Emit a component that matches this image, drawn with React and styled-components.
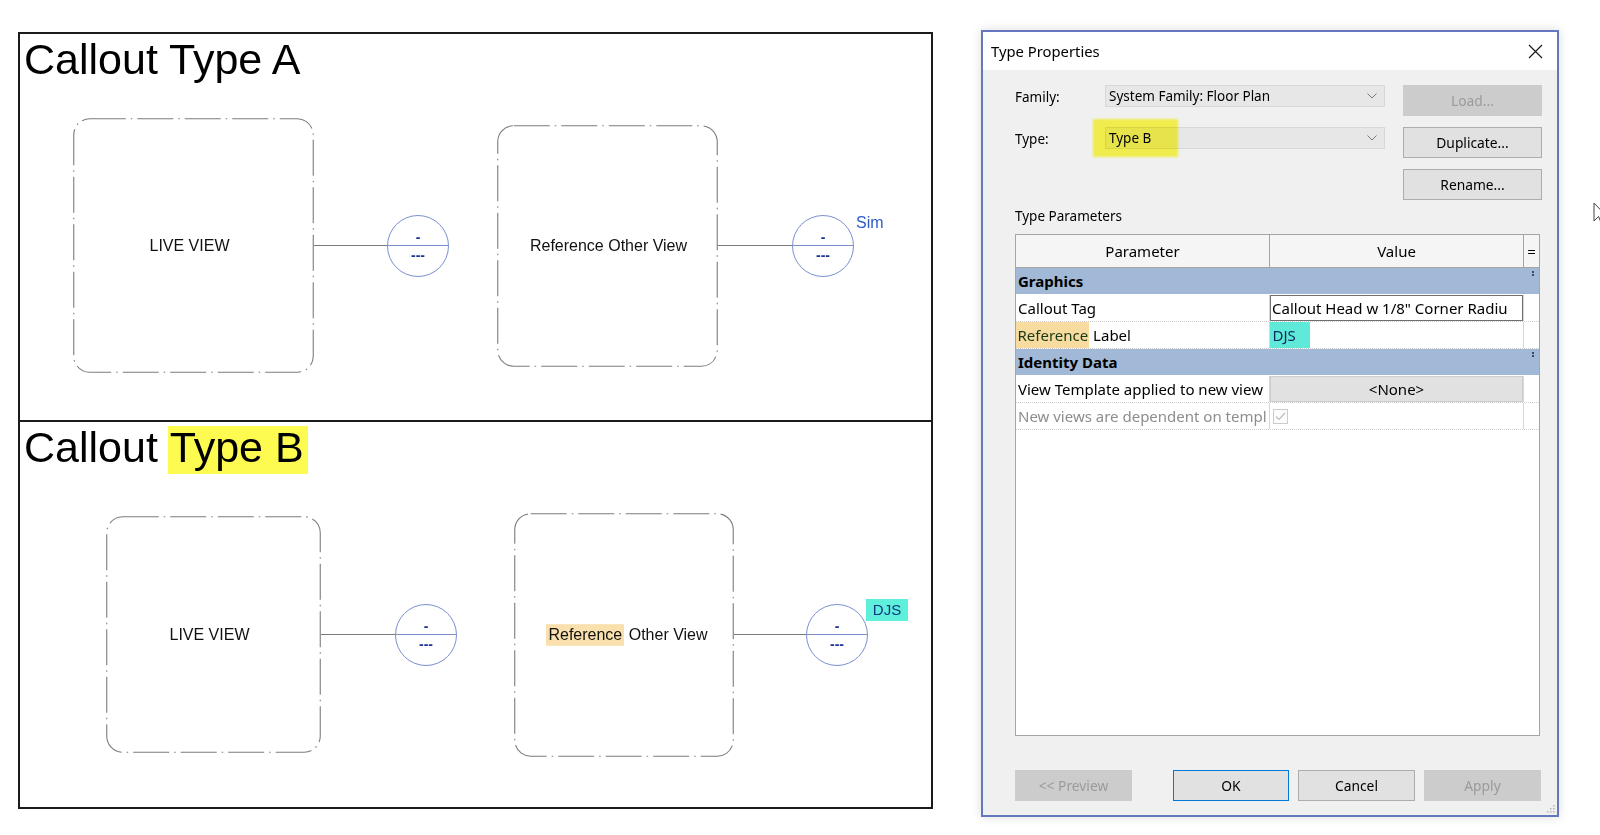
import React from "react";
import styled, { createGlobalStyle } from "styled-components";

const GlobalStyle = createGlobalStyle`
  html, body { margin: 0; padding: 0; background: #fff; }
  body { font-family: "Liberation Sans", Arial, sans-serif; }
  *, *::before, *::after { box-sizing: border-box; }
`;

const Page = styled.div`
  width: 1600px;
  height: 835px;
  overflow: hidden;
  display: flex;
  align-items: flex-start;
  padding: 30px 0 0 18px;
  background: #fff;
`;

/* ---------- drawing sheet ---------- */
const Sheet = styled.div`
  flex: none;
  margin-top: 2px;
  width: 915px;
  height: 777px;
  border: 2px solid #1b1b1b;
  display: flex;
  flex-direction: column;
`;

const Panel = styled.section`
  flex: none;
  height: ${(p) => p.$h}px;
  display: flex;
  flex-direction: column;
`;

const Divider = styled.div`
  flex: none;
  height: 2px;
  background: #1b1b1b;
`;

const SheetTitle = styled.h2`
  flex: none;
  margin: 4px 0 0 4px;
  height: 43px;
  font: 400 43px/1 "Liberation Sans", Arial, sans-serif;
  color: #000;
  white-space: nowrap;
`;

const TitleMark = styled.span`
  display: inline-block;
  background: #fdfb4f;
  padding: 0 4px 5px 2px;
  margin-left: -2px;
`;

const DiagramRow = styled.div`
  flex: none;
  height: ${(p) => p.$h}px;
  display: flex;
  align-items: center;
  padding-left: ${(p) => p.$pad}px;
`;

const ViewBox = styled.div`
  flex: none;
  width: ${(p) => p.$w}px;
  height: ${(p) => p.$h}px;
  margin-left: ${(p) => p.$ml || 0}px;
  display: grid;
  place-items: center;
  & > * { grid-area: 1 / 1; }
`;

const ViewLabel = styled.span`
  font-size: 16px;
  line-height: 20px;
  color: #111;
  white-space: nowrap;
  transform: translateX(${(p) => p.$dx || 0}px) scaleY(1.08);
`;

const LabelTint = styled.span`
  background: #f9e0ac;
  padding: 1px 2px 2px 2px;
  margin-left: -2px;
`;

const Leader = styled.div`
  flex: none;
  width: ${(p) => p.$w}px;
  height: 1px;
  background: #7a7a7a;
`;

const Tag = styled.div`
  flex: none;
  position: relative;
  width: 62px;
  height: 62px;
  border: 1px solid #7a90d0;
  border-radius: 50%;
  background: linear-gradient(#7a90cf, #7a90cf) center / 100% 1px no-repeat;
  display: flex;
  flex-direction: column;
  align-items: center;
  justify-content: center;
  gap: 2px;
`;

const TagText = styled.span`
  font-size: 14px;
  font-weight: 700;
  line-height: 16px;
  color: #1c3394;
`;

const TagNote = styled.span`
  position: absolute;
  white-space: nowrap;
  ${(p) =>
    p.$boxed
      ? `
    left: 59px; top: -6px; width: 42px; height: 22px;
    background: #5ff0dc; color: #0d3580; font-size: 15px;
    display: flex; align-items: center; justify-content: center;
  `
      : `
    left: 63px; top: -2px; font-size: 16px; color: #2c5cc5;
  `}
`;

function ViewFrame({ w, h }) {
  return (
    <svg width={w} height={h} viewBox={`0 0 ${w} ${h}`}>
      <rect
        x="0.75"
        y="0.75"
        width={w - 1.5}
        height={h - 1.5}
        rx="16"
        fill="none"
        stroke="#7c7c7c"
        strokeWidth="1.1"
        strokeDasharray="36 5 1.5 5"
      />
    </svg>
  );
}

function CalloutTag({ note, boxed }) {
  return (
    <Tag>
      <TagText>-</TagText>
      <TagText>---</TagText>
      {note && <TagNote $boxed={boxed}>{note}</TagNote>}
    </Tag>
  );
}

/* ---------- dialog ---------- */
const Dialog = styled.div`
  flex: none;
  position: relative;
  margin-left: 48px;
  width: 578px;
  height: 787px;
  border: 2px solid #6577c0;
  background: #f0f0f0;
  box-shadow: 0 0 10px rgba(0, 0, 0, 0.14);
  display: flex;
  flex-direction: column;
  font-family: "Noto Sans", "Open Sans", sans-serif;
  color: #000;
`;

const TitleBar = styled.div`
  flex: none;
  height: 38px;
  background: #fff;
  display: flex;
  align-items: center;
  justify-content: space-between;
  padding: 0 14px 0 8px;
  font-size: 14.8px;
`;

const DialogBody = styled.div`
  flex: 1;
  display: flex;
  flex-direction: column;
  padding: 15px 15px 14px 32px;
`;

const TopGrid = styled.div`
  display: grid;
  grid-template-columns: 90px 280px 1fr;
  grid-auto-rows: 31px;
  row-gap: 11px;
  align-items: start;
`;

const FieldLabel = styled.label`
  font-size: 13.5px;
  line-height: 22px;
  padding-top: 1px;
`;

const SelectBox = styled.div`
  position: relative;
  height: 22px;
  background: #e7e7e7;
  border: 1px solid #d8d8d8;
  display: flex;
  align-items: center;
  justify-content: space-between;
  padding: 0 7px 0 3px;
  font-size: 13.5px;
`;

const Highlighter = styled.span`
  position: absolute;
  left: -13px;
  top: -9px;
  width: 85px;
  height: 38px;
  background: #fffb52;
  mix-blend-mode: multiply;
  filter: blur(1.2px);
  pointer-events: none;
`;

const DlgButton = styled.button`
  width: ${(p) => p.$w || 139}px;
  height: 31px;
  justify-self: end;
  padding: 0;
  font: 13.8px "Noto Sans", "Open Sans", sans-serif;
  background: ${(p) => (p.disabled ? "#cccccc" : "#e1e1e1")};
  border: 1px solid
    ${(p) => (p.$primary ? "#0078d7" : p.disabled ? "#cccccc" : "#adadad")};
  color: ${(p) => (p.disabled ? "#9b9b9b" : "#000")};
  margin-left: ${(p) => p.$ml || 0}px;
`;

const SectionLabel = styled.div`
  margin-top: 7px;
  height: 18px;
  line-height: 18px;
  font-size: 13.5px;
`;

const ParamTable = styled.div`
  margin-top: 9px;
  width: 525px;
  height: 502px;
  border: 1px solid #a5a5a5;
  background: #fff;
  display: flex;
  flex-direction: column;
  font-size: 15px;
`;

const HeaderRow = styled.div`
  display: grid;
  grid-template-columns: 254px 254px 1fr;
  height: 33px;
  background: #f5f5f5;
  border-bottom: 1px solid #a5a5a5;
`;

const HeaderCell = styled.div`
  display: flex;
  align-items: center;
  justify-content: center;
  border-right: ${(p) => (p.$last ? "none" : "1px solid #a5a5a5")};
`;

const GroupRow = styled.div`
  position: relative;
  height: 27px;
  background: #a1b8d6;
  font-weight: 700;
  display: flex;
  align-items: center;
  padding-left: 2px;
  border-bottom: 1px solid #ffffff;
`;

const GroupMark = styled.span`
  position: absolute;
  right: 5px;
  top: 3px;
  width: 2px;
  height: 2px;
  background: #3a4a66;
  box-shadow: 0 3px 0 #3a4a66;
`;

const DataRow = styled.div`
  display: grid;
  grid-template-columns: 254px 254px 1fr;
  height: 27px;
  border-bottom: 1px dotted #d0d0d0;
`;

const Cell = styled.div`
  display: flex;
  align-items: center;
  padding-left: ${(p) => (p.$flush ? 0 : 2)}px;
  border-right: ${(p) => (p.$last ? "none" : "1px solid #d6d6d6")};
  white-space: nowrap;
  overflow: hidden;
  color: ${(p) => (p.$muted ? "#8d8d8d" : "#000")};
`;

const Tint = styled.span`
  align-self: stretch;
  display: flex;
  align-items: center;
  background: ${(p) => p.$bg};
  color: ${(p) => p.$fg};
  padding: 0 ${(p) => p.$pr}px 0 ${(p) => p.$pl}px;
  margin-left: -2px;
`;

const EditBox = styled.div`
  align-self: stretch;
  flex: 1;
  border: 1px solid #707070;
  background: #fff;
  display: flex;
  align-items: center;
  padding-left: 1px;
`;

const NoneButton = styled.div`
  align-self: stretch;
  flex: 1;
  background: #e1e1e1;
  border: 1px solid #cdcdcd;
  display: flex;
  align-items: center;
  justify-content: center;
`;

const CheckBox = styled.span`
  width: 15px;
  height: 15px;
  border: 1px solid #cbcbcb;
  background: #fcfcfc;
  display: grid;
  place-items: center;
  margin-left: 1px;
`;

const ButtonRow = styled.div`
  margin-top: auto;
  display: flex;
  gap: 9px;
`;

const Grip = styled.svg`
  position: absolute;
  right: 2px;
  bottom: 2px;
`;

const Cursor = styled.svg`
  flex: none;
  margin-left: 34px;
  margin-top: 172px;
`;

function Chevron() {
  return (
    <svg width="10" height="6" viewBox="0 0 10 6">
      <path d="M0.5 0.5 L5 5 L9.5 0.5" fill="none" stroke="#7a7a7a" strokeWidth="1" />
    </svg>
  );
}

function CloseIcon() {
  return (
    <svg width="15" height="15" viewBox="0 0 15 15">
      <path d="M1 1 L14 14 M14 1 L1 14" stroke="#1a1a1a" strokeWidth="1.2" />
    </svg>
  );
}

export default function App() {
  return (
    <>
      <GlobalStyle />
      <Page>
        <Sheet>
          <Panel $h={386}>
            <SheetTitle>Callout Type A</SheetTitle>
            <DiagramRow $h={329} $pad={53}>
              <ViewBox $w={241} $h={255}>
                <ViewFrame w={241} h={255} />
                <ViewLabel $dx={-4}>LIVE VIEW</ViewLabel>
              </ViewBox>
              <Leader $w={73} />
              <CalloutTag />
              <ViewBox $w={221} $h={242} $ml={48}>
                <ViewFrame w={221} h={242} />
                <ViewLabel $dx={1}>Reference Other View</ViewLabel>
              </ViewBox>
              <Leader $w={74} />
              <CalloutTag note="Sim" />
            </DiagramRow>
          </Panel>
          <Divider />
          <Panel $h={385}>
            <SheetTitle>
              Callout <TitleMark>Type B</TitleMark>
            </SheetTitle>
            <DiagramRow $h={331} $pad={86}>
              <ViewBox $w={215} $h={237}>
                <ViewFrame w={215} h={237} />
                <ViewLabel $dx={-4}>LIVE VIEW</ViewLabel>
              </ViewBox>
              <Leader $w={74} />
              <CalloutTag />
              <ViewBox $w={220} $h={244} $ml={57}>
                <ViewFrame w={220} h={244} />
                <ViewLabel $dx={4}>
                  <LabelTint>Reference</LabelTint> Other View
                </ViewLabel>
              </ViewBox>
              <Leader $w={72} />
              <CalloutTag note="DJS" boxed />
            </DiagramRow>
          </Panel>
        </Sheet>

        <Dialog>
          <TitleBar>
            <span>Type Properties</span>
            <CloseIcon />
          </TitleBar>
          <DialogBody>
            <TopGrid>
              <FieldLabel>Family:</FieldLabel>
              <SelectBox>
                <span>System Family: Floor Plan</span>
                <Chevron />
              </SelectBox>
              <DlgButton disabled>Load...</DlgButton>

              <FieldLabel>Type:</FieldLabel>
              <SelectBox>
                <span>Type B</span>
                <Chevron />
                <Highlighter />
              </SelectBox>
              <DlgButton>Duplicate...</DlgButton>

              <span />
              <span />
              <DlgButton>Rename...</DlgButton>
            </TopGrid>

            <SectionLabel>Type Parameters</SectionLabel>

            <ParamTable>
              <HeaderRow>
                <HeaderCell>Parameter</HeaderCell>
                <HeaderCell>Value</HeaderCell>
                <HeaderCell $last>=</HeaderCell>
              </HeaderRow>

              <GroupRow>
                Graphics
                <GroupMark />
              </GroupRow>
              <DataRow>
                <Cell>Callout Tag</Cell>
                <Cell $flush>
                  <EditBox>Callout Head w 1/8" Corner Radiu</EditBox>
                </Cell>
                <Cell $last />
              </DataRow>
              <DataRow>
                <Cell>
                  <Tint $bg="#f8dc9f" $fg="#173a17" $pl={1.5} $pr={1}>
                    Reference
                  </Tint>
                  &nbsp;Label
                </Cell>
                <Cell>
                  <Tint $bg="#5ee9d8" $fg="#0b2a5a" $pl={2.5} $pr={14}>
                    DJS
                  </Tint>
                </Cell>
                <Cell $last />
              </DataRow>

              <GroupRow>
                Identity Data
                <GroupMark />
              </GroupRow>
              <DataRow>
                <Cell>View Template applied to new view</Cell>
                <Cell $flush>
                  <NoneButton>&lt;None&gt;</NoneButton>
                </Cell>
                <Cell $last />
              </DataRow>
              <DataRow>
                <Cell $muted>New views are dependent on templ</Cell>
                <Cell>
                  <CheckBox>
                    <svg width="11" height="9" viewBox="0 0 11 9">
                      <path d="M1 4.5 L4 7.5 L10 1" fill="none" stroke="#bdbdbd" strokeWidth="1.2" />
                    </svg>
                  </CheckBox>
                </Cell>
                <Cell $last />
              </DataRow>
            </ParamTable>

            <ButtonRow>
              <DlgButton $w={117} disabled>
                &lt;&lt; Preview
              </DlgButton>
              <DlgButton $w={116} $primary $ml={32}>
                OK
              </DlgButton>
              <DlgButton $w={117}>Cancel</DlgButton>
              <DlgButton $w={117} disabled>
                Apply
              </DlgButton>
            </ButtonRow>
          </DialogBody>
          <Grip width="10" height="10" viewBox="0 0 10 10">
            <g fill="#b5b5b5">
              <rect x="8" y="2" width="1.5" height="1.5" />
              <rect x="5" y="5" width="1.5" height="1.5" />
              <rect x="8" y="5" width="1.5" height="1.5" />
              <rect x="2" y="8" width="1.5" height="1.5" />
              <rect x="5" y="8" width="1.5" height="1.5" />
              <rect x="8" y="8" width="1.5" height="1.5" />
            </g>
          </Grip>
        </Dialog>

        <Cursor width="14" height="24" viewBox="0 0 14 24">
          <path
            d="M1 1 L1 19 L5.5 14.5 L8.5 21.5 L11 20.5 L8 13.5 L13 13.5 Z"
            fill="#fff"
            stroke="#444"
            strokeWidth="1"
            strokeLinejoin="round"
          />
        </Cursor>
      </Page>
    </>
  );
}
